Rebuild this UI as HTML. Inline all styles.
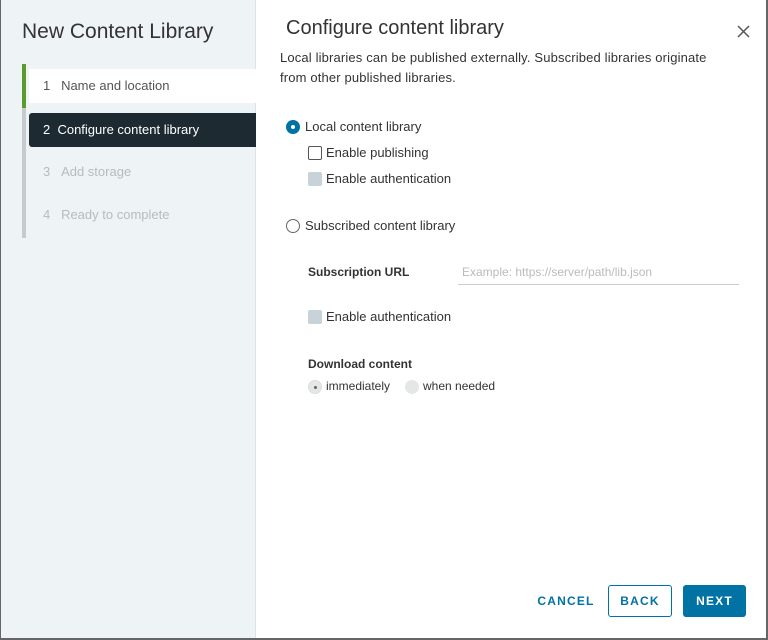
<!DOCTYPE html>
<html><head><style>
*{margin:0;padding:0;box-sizing:border-box}
body{width:768px;height:640px;background:#666;font-family:"Liberation Sans",sans-serif;position:relative;overflow:hidden}
.win{position:absolute;left:1px;top:0;width:765px;height:638px;background:#fff}
.side{position:absolute;left:0;top:0;width:255px;height:638px;background:#eef3f6;border-right:1px solid #dde2e5}
.t{position:absolute;font-size:13px;color:#333;white-space:nowrap}
h1{position:absolute;left:21px;top:20px;font-size:21px;font-weight:normal;color:#333}
.bar{position:absolute;left:21px;top:64px;width:4px;height:174px;background:#c5cbcf}
.bar i{position:absolute;left:0;top:0;width:4px;height:44px;background:#5a9a2e}
.step{position:absolute;left:28px;width:227px;height:34px;font-size:13px;line-height:34px;padding-left:14px}
.cb{position:absolute;width:14px;height:14px;border-radius:2px}
.rd{position:absolute;width:14px;height:14px;border-radius:50%}
.btn{position:absolute;top:585px;height:32px;font-size:12px;font-weight:bold;letter-spacing:1.2px;line-height:32px;text-align:center;border-radius:3px}
</style></head><body>
<div class="win">
<div class="side">
<h1>New Content Library</h1>
<div class="bar"><i></i></div>
<div class="step" style="top:69px;background:#fff;color:#555">1&nbsp;&nbsp;&nbsp;Name and location</div>
<div class="step" style="top:113px;background:#1e2a32;color:#fff;border-radius:3px 0 0 3px">2&nbsp;&nbsp;Configure content library</div>
<div class="step" style="top:155px;color:#b5bcc1">3&nbsp;&nbsp;&nbsp;Add storage</div>
<div class="step" style="top:198px;color:#b5bcc1">4&nbsp;&nbsp;&nbsp;Ready to complete</div>
</div>
<div class="t" style="left:285px;top:17px;font-size:20px">Configure content library</div>
<svg style="position:absolute;left:736px;top:25px" width="13" height="13"><path d="M1 1L12 12M12 1L1 12" stroke="#555" stroke-width="1.5"/></svg>
<div class="t" style="left:279px;top:48px;line-height:20px;font-size:13px;letter-spacing:0.15px">Local libraries can be published externally. Subscribed libraries originate<br>from other published libraries.</div>
<div class="rd" style="left:285px;top:120px;background:#0072a3"><span style="position:absolute;left:5px;top:5px;width:4px;height:4px;border-radius:50%;background:#fff"></span></div>
<div class="t" style="left:304px;top:119px">Local content library</div>
<div class="cb" style="left:307px;top:146px;border:1px solid #555"></div>
<div class="t" style="left:325px;top:145px">Enable publishing</div>
<div class="cb" style="left:307px;top:172px;background:#c8d2d9"></div>
<div class="t" style="left:325px;top:171px">Enable authentication</div>
<div class="rd" style="left:285px;top:219px;border:1px solid #666"></div>
<div class="t" style="left:304px;top:218px">Subscribed content library</div>
<div class="t" style="left:307px;top:265px;font-weight:bold;font-size:12px">Subscription URL</div>
<div class="t" style="left:461px;top:265px;font-size:12px;color:#bbb">Example: https://server/path/lib.json</div>
<div style="position:absolute;left:457px;top:284px;width:281px;height:1px;background:#ccc"></div>
<div class="cb" style="left:307px;top:310px;background:#c8d2d9"></div>
<div class="t" style="left:325px;top:309px">Enable authentication</div>
<div class="t" style="left:307px;top:357px;font-weight:bold;font-size:12px">Download content</div>
<div class="rd" style="left:307px;top:380px;background:#e4e6e8;border:1px solid #ddd"><span style="position:absolute;left:5px;top:5px;width:3px;height:3px;border-radius:50%;background:#666"></span></div>
<div class="t" style="left:325px;top:379px;font-size:12px">immediately</div>
<div class="rd" style="left:404px;top:380px;background:#e4e6e8"></div>
<div class="t" style="left:422px;top:379px;font-size:12px">when needed</div>
<div class="btn" style="left:530px;width:70px;color:#0072a3">CANCEL</div>
<div class="btn" style="left:607px;width:64px;color:#0072a3;border:1px solid #0072a3;line-height:30px">BACK</div>
<div class="btn" style="left:682px;width:63px;color:#fff;background:#0072a3">NEXT</div>
</div>
</body></html>
